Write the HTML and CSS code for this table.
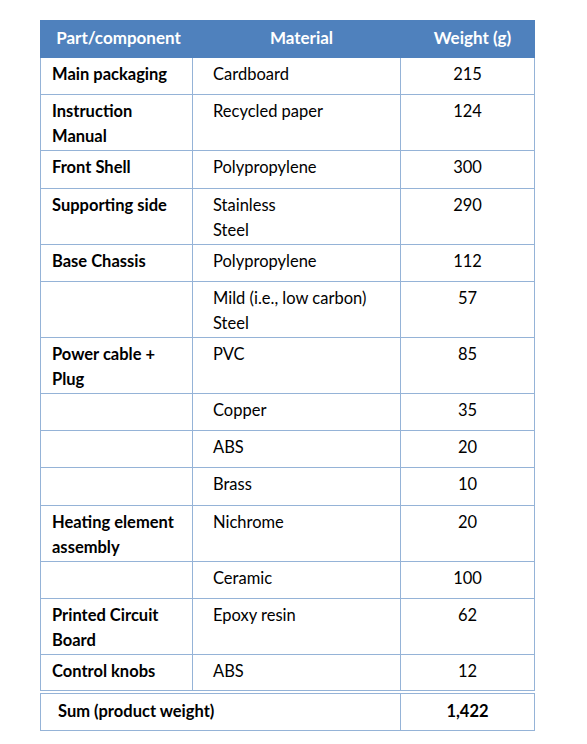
FILE: index.html
```html
<!DOCTYPE html>
<html>
<head>
<meta charset="utf-8">
<link rel="stylesheet" href="styles.css">
</head>
<body>
<div class="wrap">
<table class="parts">
  <colgroup>
    <col class="c1"><col class="c2"><col class="c3">
  </colgroup>
  <thead>
    <tr class="head">
      <th class="h1">Part/component</th>
      <th class="h2">Material</th>
      <th class="h3">Weight (g)</th>
    </tr>
  </thead>
  <tbody>
    <tr class="r1"><td class="part">Main packaging</td><td class="mat">Cardboard</td><td class="wt">215</td></tr>
    <tr class="r2"><td class="part">Instruction<br>Manual</td><td class="mat">Recycled paper</td><td class="wt">124</td></tr>
    <tr class="r1"><td class="part">Front Shell</td><td class="mat">Polypropylene</td><td class="wt">300</td></tr>
    <tr class="r2"><td class="part">Supporting side</td><td class="mat">Stainless<br>Steel</td><td class="wt">290</td></tr>
    <tr class="r1"><td class="part">Base Chassis</td><td class="mat">Polypropylene</td><td class="wt">112</td></tr>
    <tr class="r2"><td class="part"></td><td class="mat">Mild (i.e., low carbon)<br>Steel</td><td class="wt">57</td></tr>
    <tr class="r2"><td class="part">Power cable +<br>Plug</td><td class="mat">PVC</td><td class="wt">85</td></tr>
    <tr class="r1"><td class="part"></td><td class="mat">Copper</td><td class="wt">35</td></tr>
    <tr class="r1"><td class="part"></td><td class="mat">ABS</td><td class="wt">20</td></tr>
    <tr class="r1"><td class="part"></td><td class="mat">Brass</td><td class="wt">10</td></tr>
    <tr class="r2"><td class="part">Heating element<br>assembly</td><td class="mat">Nichrome</td><td class="wt">20</td></tr>
    <tr class="r1"><td class="part"></td><td class="mat">Ceramic</td><td class="wt">100</td></tr>
    <tr class="r2"><td class="part">Printed Circuit<br>Board</td><td class="mat">Epoxy resin</td><td class="wt">62</td></tr>
    <tr class="r1"><td class="part">Control knobs</td><td class="mat">ABS</td><td class="wt">12</td></tr>
    <tr class="sum"><td class="sumlabel" colspan="2">Sum (product weight)</td><td class="wt sumval">1,422</td></tr>
  </tbody>
</table>
</div>
</body>
</html>
```

FILE: styles.css
```css
html, body {
  margin: 0;
  padding: 0;
  background: #ffffff;
}
body {
  font-family: Lato, "Open Sans", "Liberation Sans", sans-serif;
  font-size: 16.5px;
  color: #000000;
}
.wrap {
  padding: 20px 0 0 40px;
}
.parts {
  border-collapse: collapse;
  table-layout: fixed;
  width: 494px;
}
.c1 { width: 152px; }
.c2 { width: 208px; }
.c3 { width: 134px; }
.parts th, .parts td {
  border: 1px solid #95b3d7;
  line-height: 25px;
  padding: 4px 0 0 0;
  vertical-align: top;
  text-align: left;
}
.head th {
  background: #4f81bd;
  border-color: #4f81bd;
  color: #ffffff;
  font-weight: bold;
  font-size: 17px;
  height: 32px;
  padding: 0 0 4px 0;
  vertical-align: middle;
  text-align: center;
}
.h1 { padding-left: 4px !important; }
.h2 { padding-left: 10px !important; }
.h3 { padding-left: 10px !important; }
.r1 { height: 37.25px; }
.r2 { height: 56px; }
.part {
  font-weight: bold;
  padding-left: 11px !important;
}
.mat {
  padding-left: 20px !important;
}
.wt {
  text-align: center !important;
}
.sum { height: 39px; }
.sum td {
  border-top: 4px double #95b3d7;
  padding-top: 5px;
}
.sumlabel {
  font-weight: bold;
  padding-left: 17px !important;
}
.sumval {
  font-weight: bold;
}
```
